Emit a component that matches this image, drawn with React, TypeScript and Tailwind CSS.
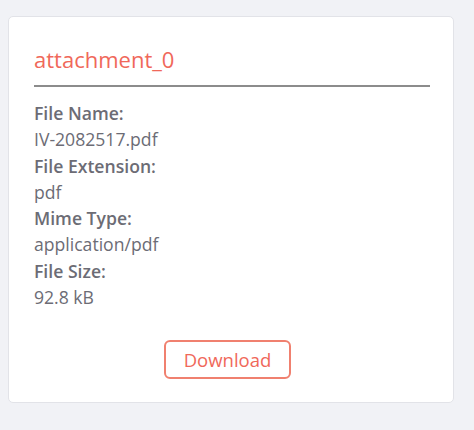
import React from "react";

const rows: [string, string][] = [
  ["File Name:", "IV-2082517.pdf"],
  ["File Extension:", "pdf"],
  ["Mime Type:", "application/pdf"],
  ["File Size:", "92.8 kB"],
];

export default function App() {
  return (
    <div
      className="w-[474px] h-[430px] bg-[#f1f2f6] pt-[16px] pl-[8px]"
      style={{ fontFamily: '"Open Sans", sans-serif' }}
    >
      <div className="w-[446px] h-[387px] bg-white border border-[#e2e3e8] rounded-[5px] pt-[27px] pl-[25px] pr-[23px] flex flex-col">
        <div className="text-[22px] leading-[30px] text-[#f0685a] pb-[11px] border-b-2 border-[#8c8c8c]">
          attachment_0
        </div>
        <div className="mt-[13px] flex flex-col text-[17.6px] leading-[26.3px] text-[#6c6c75]">
          {rows.map(([k, v]) => (
            <React.Fragment key={k}>
              <div className="font-semibold">{k}</div>
              <div>{v}</div>
            </React.Fragment>
          ))}
        </div>
        <div className="flex justify-center mt-[30px] pr-[9px]">
          <button className="w-[127px] h-[39px] border-2 border-[#f0806f] rounded-[6px] text-[#f0685a] text-[18.5px] bg-white">
            Download
          </button>
        </div>
      </div>
    </div>
  );
}
